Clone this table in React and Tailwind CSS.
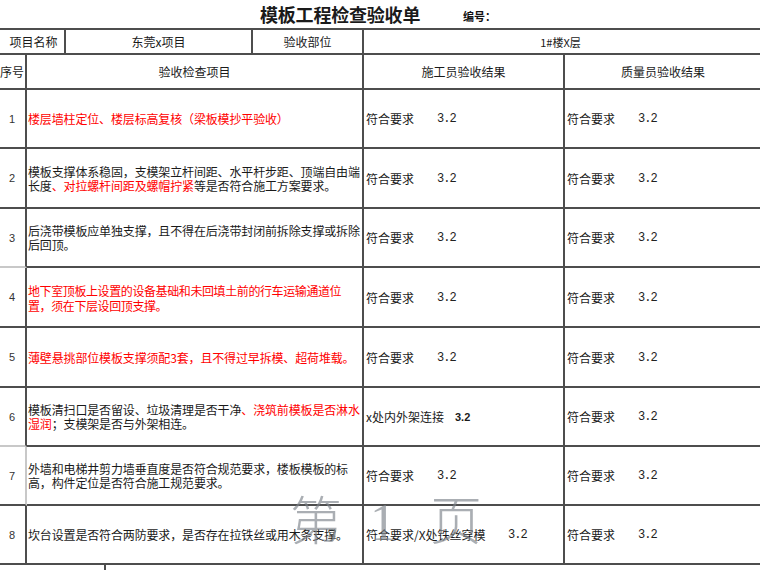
import React from "react";

const R = ({ children }) => <span className="text-[#ff0000]">{children}</span>;

const rows = [
  {
    no: "1",
    item: <R>楼层墙柱定位、楼层标高复核（梁板模抄平验收）</R>,
  },
  {
    no: "2",
    item: (
      <>
        模板支撑体系稳固，支模架立杆间距、水平杆步距、顶端自由端
        <br />
        长度<R>、对拉螺杆间距及螺帽拧紧</R>等是否符合施工方案要求。
      </>
    ),
  },
  {
    no: "3",
    item: (
      <>
        后浇带模板应单独支撑，且不得在后浇带封闭前拆除支撑或拆除
        <br />
        后回顶。
      </>
    ),
    lightBottom: true,
  },
  {
    no: "4",
    item: (
      <R>
        地下室顶板上设置的设备基础和未回填土前的行车运输通道位
        <br />
        置，须在下层设回顶支撑。
      </R>
    ),
    tight: true,
  },
  {
    no: "5",
    item: <R>薄壁悬挑部位模板支撑须配3套，且不得过早拆模、超荷堆载。</R>,
  },
  {
    no: "6",
    item: (
      <>
        模板清扫口是否留设、垃圾清理是否干净<R>、浇筑前模板是否淋水</R>
        <br />
        <R>湿润</R>；支模架是否与外架相连。
      </>
    ),
    result: "x处内外架连接",
    resultW: "w-[89px]",
    boldNum: true,
    lightBottom: true,
  },
  {
    no: "7",
    item: (
      <>
        外墙和电梯井剪力墙垂直度是否符合规范要求，楼板模板的标
        <br />
        高，构件定位是否符合施工规范要求。
      </>
    ),
    lightRight: true,
  },
  {
    no: "8",
    item: <>坎台设置是否符合两防要求，是否存在拉铁丝或用木条支撑。</>,
    result: "符合要求/X处铁丝穿模",
    resultW: "w-[142px]",
  },
];

const line = "border-[#4d4d4d]";

const Num = () => (
  <span className="font-['Liberation_Mono',monospace] text-[12px] tracking-[-1px] text-[#222]">3.2</span>
);

export default function App() {
  return (
    <div className="relative w-[760px] h-[570px] overflow-hidden bg-white font-['Noto_Sans_CJK_SC',sans-serif] text-[#1a1a1a]">
      {/* title */}
      <div className="h-[28px] relative">
        <div className="absolute left-[260px] top-[2px] text-[18px] leading-[24px] font-bold tracking-[-0.2px] text-[#1a1a1a]">
          模板工程检查验收单
        </div>
        <div className="absolute left-[463px] top-[7px] text-[11px] leading-[18px] font-bold text-[#111]">
          编号：
        </div>
      </div>

      {/* table */}
      <div
        className={`ml-[-3px] grid grid-cols-[30px_39px_187px_111px_201px_200px] grid-rows-[25px_35px_59px_60px_59px_60px_60px_59px_59px_59px] border-t-2 ${line} text-[12px] leading-[14px]`}
      >
        <div className={`col-span-2 border-r-2 border-b-2 ${line} flex items-center justify-center pl-[6px]`}>
          项目名称
        </div>
        <div className={`border-r-2 border-b-2 ${line} flex items-center justify-center`}>东莞x项目</div>
        <div className={`border-r-2 border-b-2 ${line} flex items-center justify-center`}>验收部位</div>
        <div className={`col-span-2 border-b-2 ${line} flex items-center justify-center text-[11px] pr-[8px]`}>
          1#楼X层
        </div>

        <div className={`border-r-2 border-b-2 ${line} flex items-center justify-center pl-[2px]`}>序号</div>
        <div className={`col-span-3 border-r-2 border-b-2 ${line} flex items-center justify-center`}>验收检查项目</div>
        <div className={`border-r-2 border-b-2 ${line} flex items-center justify-center`}>施工员验收结果</div>
        <div className={`border-b-2 ${line} flex items-center justify-center pr-[4px]`}>质量员验收结果</div>

        {rows.map((r) => (
          <React.Fragment key={r.no}>
            <div
              className={`border-r-2 border-b-2 flex items-center justify-center pl-[2px] text-[11px] text-[#333] font-['Liberation_Sans',sans-serif] ${
                r.lightRight ? "border-r-[#c8c8c8]" : "border-r-[#4d4d4d]"
              } ${r.lightBottom ? "border-b-[#c8c8c8]" : "border-b-[#4d4d4d]"}`}
            >
              {r.no}
            </div>
            <div className={`col-span-3 border-r-2 border-b-2 ${line} flex items-center pl-[1px] pt-[1px]`}>
              <div
                className={`whitespace-nowrap ${
                  r.tight ? "tracking-[-0.4px] leading-[15px]" : "tracking-[-0.15px] leading-[14px]"
                }`}
              >
                {r.item}
              </div>
            </div>
            <div className={`border-r-2 border-b-2 ${line} flex items-center pl-[2px] pt-[1px] whitespace-nowrap`}>
              <span className={r.resultW || "w-[71px]"}>{r.result || "符合要求"}</span>
              {r.boldNum ? (
                <span className="font-['Liberation_Sans',sans-serif] font-bold text-[11px]">3.2</span>
              ) : (
                <Num />
              )}
            </div>
            <div className={`border-b-2 ${line} flex items-center pl-[2px] pt-[1px] whitespace-nowrap`}>
              <span className="w-[71px]">符合要求</span>
              <Num />
            </div>
          </React.Fragment>
        ))}
      </div>

      {/* below the table */}
      <div className="h-[5px] ml-[104px] border-l-2 border-[#4d4d4d]" />

      {/* page watermark */}
      <div className="absolute left-[290px] top-[486px] flex items-baseline text-[rgba(125,130,138,0.65)] text-[52px] leading-[64px] font-extralight pointer-events-none">
        <span>第</span>
        <span className="ml-[28px] font-['Liberation_Serif',serif] font-normal">1</span>
        <span className="ml-[34px]">页</span>
      </div>
    </div>
  );
}
